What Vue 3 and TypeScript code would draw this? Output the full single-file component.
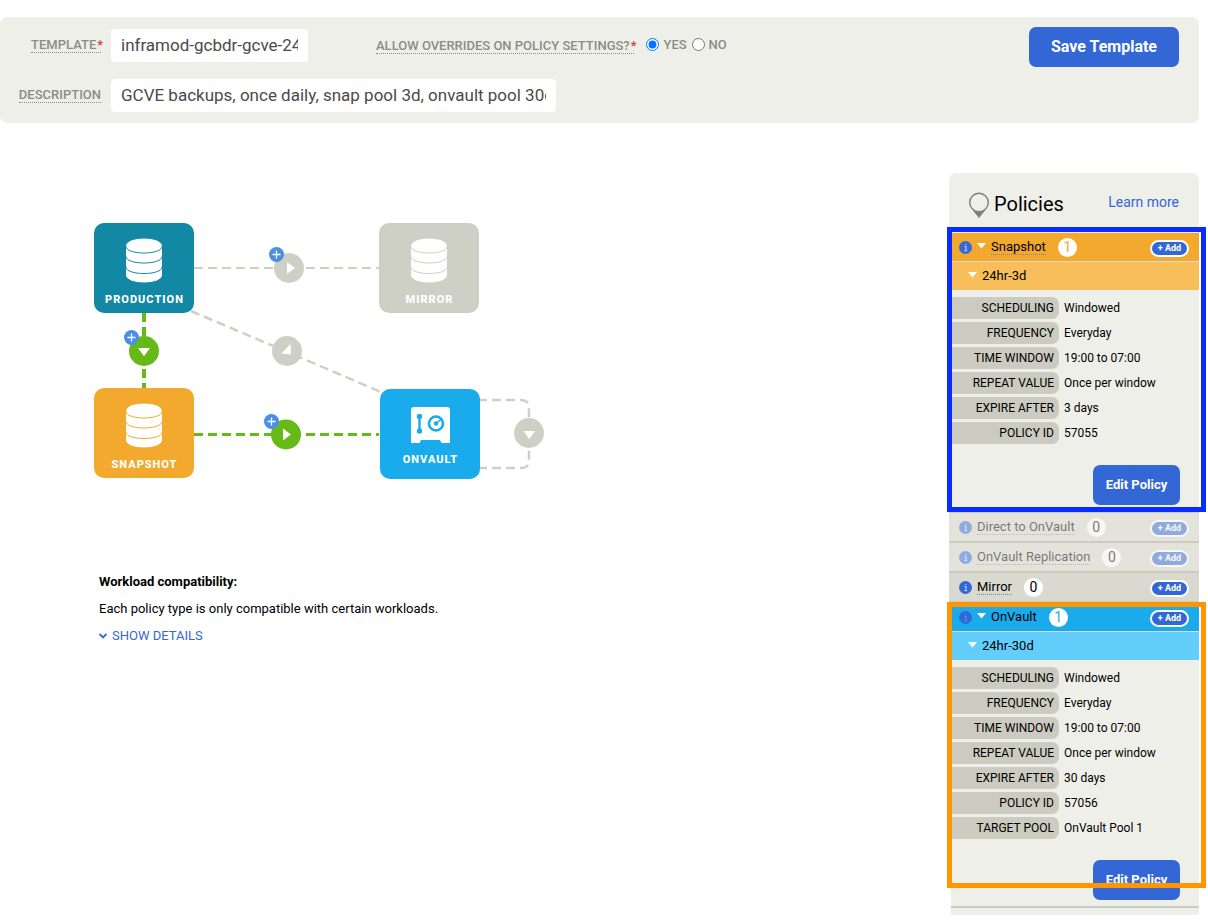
<script setup lang="ts">
import { ref } from 'vue'

interface Field {
  label: string
  value: string
}

interface Policy {
  name: string
  fields: Field[]
}

interface Section {
  id: string
  title: string
  count: number
  disabled?: boolean
  highlighted?: boolean
  policy?: Policy
}

interface FlowNode {
  id: string
  label: string
  icon: 'disks' | 'vault'
}

const templateName = ref('inframod-gcbdr-gcve-24hr')
const description = ref('GCVE backups, once daily, snap pool 3d, onvault pool 30d')
const allowOverrides = ref('yes')

const nodes: FlowNode[] = [
  { id: 'production', label: 'PRODUCTION', icon: 'disks' },
  { id: 'mirror', label: 'MIRROR', icon: 'disks' },
  { id: 'snapshot', label: 'SNAPSHOT', icon: 'disks' },
  { id: 'onvault', label: 'ONVAULT', icon: 'vault' },
]

const sections: Section[] = [
  {
    id: 'snapshot',
    title: 'Snapshot',
    count: 1,
    highlighted: true,
    policy: {
      name: '24hr-3d',
      fields: [
        { label: 'SCHEDULING', value: 'Windowed' },
        { label: 'FREQUENCY', value: 'Everyday' },
        { label: 'TIME WINDOW', value: '19:00 to 07:00' },
        { label: 'REPEAT VALUE', value: 'Once per window' },
        { label: 'EXPIRE AFTER', value: '3 days' },
        { label: 'POLICY ID', value: '57055' },
      ],
    },
  },
  { id: 'direct', title: 'Direct to OnVault', count: 0, disabled: true },
  { id: 'replication', title: 'OnVault Replication', count: 0, disabled: true },
  { id: 'mirror', title: 'Mirror', count: 0 },
  {
    id: 'onvault',
    title: 'OnVault',
    count: 1,
    highlighted: true,
    policy: {
      name: '24hr-30d',
      fields: [
        { label: 'SCHEDULING', value: 'Windowed' },
        { label: 'FREQUENCY', value: 'Everyday' },
        { label: 'TIME WINDOW', value: '19:00 to 07:00' },
        { label: 'REPEAT VALUE', value: 'Once per window' },
        { label: 'EXPIRE AFTER', value: '30 days' },
        { label: 'POLICY ID', value: '57056' },
        { label: 'TARGET POOL', value: 'OnVault Pool 1' },
      ],
    },
  },
]
</script>

<template>
  <div class="page">
    <header class="template-bar">
      <form class="template-form" @submit.prevent>
        <div class="form-row">
          <div class="label-cell">
            <label class="field-label" for="template-name">TEMPLATE<span class="required">*</span></label>
          </div>
          <input id="template-name" v-model="templateName" class="text-input name-input" type="text" />
          <div class="overrides" role="radiogroup" aria-labelledby="overrides-label">
            <span id="overrides-label" class="field-label overrides-label">ALLOW OVERRIDES ON POLICY SETTINGS?<span class="required">*</span></span>
            <label class="radio"><input v-model="allowOverrides" type="radio" name="overrides" value="yes" />YES</label>
            <label class="radio"><input v-model="allowOverrides" type="radio" name="overrides" value="no" />NO</label>
          </div>
        </div>
        <div class="form-row">
          <div class="label-cell">
            <label class="field-label" for="template-description">DESCRIPTION</label>
          </div>
          <input id="template-description" v-model="description" class="text-input description-input" type="text" />
        </div>
      </form>
      <button class="primary save" type="button">Save Template</button>
    </header>

    <main class="content">
      <section class="workspace">
        <div class="canvas">
          <svg class="links" viewBox="0 0 460 260" width="460" height="260" aria-hidden="true">
            <g fill="none" stroke="#cfd0c5" stroke-width="2" stroke-dasharray="9 5">
              <path d="M100 45H285" />
              <path d="M97 88L287 169" stroke-width="2.500" />
              <path d="M386 177H427Q435 177 435 185V195" stroke-width="2.500" stroke-dashoffset="2" />
              <path d="M386 245H427Q435 245 435 237V225" stroke-width="2.500" stroke-dashoffset="2" />
            </g>
            <g fill="none" stroke="#65ba16" stroke-dasharray="9 5">
              <path d="M50 90V165" stroke-width="4" />
              <path d="M100 211.500H285" stroke-width="3" />
            </g>
            <g fill="#cfd0c5">
              <circle cx="195" cy="45" r="15" />
              <circle cx="193" cy="128" r="15" />
              <circle cx="435" cy="210" r="15" />
            </g>
            <g fill="#65ba16">
              <circle cx="50" cy="128" r="15" />
              <circle cx="192" cy="211.500" r="15" />
            </g>
            <g fill="#fff">
              <path d="M193 39L201 45L193 51Z" />
              <path d="M196.500 121L197 131.500L187.300 130.500Z" />
              <path d="M429.500 208H441L435.200 216Z" />
              <path d="M44 125H56L50 133.200Z" />
              <path d="M189 205.500L197 211.500L189 217.500Z" />
            </g>
            <g fill="#4a8fe2">
              <circle cx="182.500" cy="31.500" r="7.500" />
              <circle cx="37.500" cy="114.500" r="7.500" />
              <circle cx="177.500" cy="198.500" r="7.500" />
            </g>
            <g stroke="#fff" stroke-width="1.300">
              <path d="M178.500 31.500h8M182.500 27.500v8" />
              <path d="M33.500 114.500h8M37.500 110.500v8" />
              <path d="M173.500 198.500h8M177.500 194.500v8" />
            </g>
          </svg>
          <button v-for="node in nodes" :key="node.id" type="button" class="node" :class="node.id">
            <svg v-if="node.icon === 'disks'" class="node-icon" viewBox="0 0 38 45" width="38" height="45" aria-hidden="true">
              <path d="M1 8C1 3.500 9 .5 19 .5S37 3.500 37 8V37C37 41.500 29 44.500 19 44.500S1 41.500 1 37Z" fill="#fff" />
              <g fill="none" stroke="currentColor" stroke-width="1">
                <path d="M1 8.500C1 12.500 9 15 19 15S37 12.500 37 8.500" />
                <path d="M1 18.500C1 22.500 9 25 19 25S37 22.500 37 18.500" />
                <path d="M1 29C1 33 9 35.500 19 35.500S37 33 37 29" />
              </g>
            </svg>
            <svg v-else class="node-icon" viewBox="0 0 39 36" width="39" height="36" aria-hidden="true">
              <path d="M3 0H36Q39 0 39 3V36H30.500L29 33H10L8.500 36H0V3Q0 0 3 0Z" fill="#fff" />
              <g fill="none" stroke="currentColor">
                <path d="M8.500 10V24" stroke-width="2.400" />
                <circle cx="25" cy="16.500" r="7" stroke-width="2.600" />
                <path d="M25 16.500L30.500 12" stroke-width="1.600" />
              </g>
              <g fill="currentColor">
                <circle cx="8.500" cy="9.500" r="2.700" />
                <circle cx="8.500" cy="24" r="2.700" />
                <circle cx="25" cy="16.500" r="2.200" />
              </g>
            </svg>
            <span class="node-label">{{ node.label }}</span>
          </button>
        </div>

        <div class="compatibility">
          <h2>Workload compatibility:</h2>
          <p>Each policy type is only compatible with certain workloads.</p>
          <a href="#details" class="details-link">
            <svg viewBox="0 0 8 6" width="8" height="6" aria-hidden="true">
              <path d="M.5 1L4 4.500L7.500 1" fill="none" stroke="currentColor" stroke-width="1.800" />
            </svg>
            SHOW DETAILS
          </a>
        </div>
      </section>

      <aside class="policies">
        <div class="policies-header">
          <svg viewBox="0 0 20 26" width="20" height="26" aria-hidden="true">
            <path d="M4.500 18.500Q10 22 15.500 18.500L10 25.500Z" fill="#7d7f78" stroke="#7d7f78" />
            <circle cx="10" cy="10.500" r="9.300" fill="#efefea" stroke="#7d7f78" stroke-width="1.400" />
          </svg>
          <h1>Policies</h1>
          <a href="#learn">Learn more</a>
        </div>

        <section v-for="section in sections" :key="section.id" class="section" :class="section.id">
          <div class="section-row" :class="{ disabled: section.disabled }">
            <svg class="info" viewBox="0 0 13 13" width="13" height="13" aria-hidden="true">
              <circle cx="6.500" cy="6.500" r="6.500" fill="#3367d6" />
              <path d="M5.500 5.500H7V9.500M5.200 9.700H8.200M6 3.500H7.200" fill="none" stroke="currentColor" stroke-width="1.100" />
            </svg>
            <svg v-if="section.policy" class="caret" viewBox="0 0 9 8" width="9" height="8" aria-hidden="true">
              <path d="M0 0H9L4.500 5.500Z" fill="#fff" />
            </svg>
            <span class="section-title">{{ section.title }}</span>
            <span class="count">{{ section.count }}</span>
            <button class="add" type="button" :disabled="section.disabled">+ Add</button>
          </div>
          <template v-if="section.policy">
            <div class="policy-row">
              <svg viewBox="0 0 9 6" width="9" height="6" aria-hidden="true">
                <path d="M0 0H9L4.500 5.500Z" fill="#fff" />
              </svg>
              {{ section.policy.name }}
            </div>
            <div class="policy-body">
              <dl>
                <div v-for="field in section.policy.fields" :key="field.label" class="field">
                  <dt>{{ field.label }}</dt>
                  <dd>{{ field.value }}</dd>
                </div>
              </dl>
              <button class="primary edit" type="button">Edit Policy</button>
            </div>
          </template>
          <div v-if="section.highlighted" class="highlight"></div>
        </section>
        <div class="policies-footer"></div>
      </aside>
    </main>
  </div>
</template>

<style>
body {
  margin: 0;
  background: #fff;
}
</style>

<style scoped>
.page {
  box-sizing: border-box;
  padding: 17px 9px 8px 0;
  font-family: Roboto, 'Liberation Sans', sans-serif;
  font-size: 13px;
  color: #000;
}

.page button,
.page input {
  font-family: inherit;
}

.page a {
  color: #3367d6;
  text-decoration: none;
}

.template-bar {
  display: flex;
  justify-content: space-between;
  align-items: flex-start;
  padding: 10px 20px 9px 9px;
  border-radius: 7px;
  background: #efefea;
}

.template-form {
  display: flex;
  flex-direction: column;
  gap: 17px;
  padding: 2px 0;
}

.form-row {
  display: flex;
  align-items: center;
  gap: 10px;
}

.label-cell {
  width: 92px;
  padding-bottom: 2px;
  text-align: right;
}

.field-label {
  display: inline-block;
  border-bottom: 1px dotted #8b8d84;
  font-size: 13px;
  font-weight: 500;
  line-height: 15px;
  white-space: nowrap;
  color: #8b8d84;
}

.required {
  margin: 0 -2px 0 1px;
  color: #d23f31;
}

.text-input {
  box-sizing: border-box;
  height: 33px;
  padding: 0 10px 2px;
  border: 0;
  border-radius: 4px;
  background: #fff;
  font-size: 17px;
  color: #4a4a4a;
}

.name-input {
  width: 197px;
}

.description-input {
  width: 445px;
}

.overrides {
  display: flex;
  align-items: center;
  gap: 5px;
  margin-left: 58px;
  padding-bottom: 2px;
}

.overrides-label {
  margin: 2px 7px 0 0;
}

.radio {
  display: flex;
  align-items: center;
  gap: 4px;
  font-weight: 500;
  color: #8b8d84;
}

.radio input {
  width: 13px;
  height: 13px;
  margin: 0;
}

.primary {
  height: 40px;
  padding: 0 0 2px;
  border: 0;
  border-radius: 7px;
  background: #3367d6;
  font-weight: 700;
  color: #fff;
}

.save {
  width: 150px;
  font-size: 16px;
}

.content {
  display: flex;
  justify-content: space-between;
  align-items: flex-start;
  padding-top: 50px;
}

.workspace {
  padding: 50px 0 0 94px;
}

.canvas {
  position: relative;
  width: 460px;
  height: 260px;
}

.links {
  display: block;
}

.node {
  position: absolute;
  display: flex;
  flex-direction: column;
  align-items: center;
  gap: 10px;
  width: 100px;
  height: 90px;
  padding: 15px 0 0;
  border: 0;
  border-radius: 10px;
}

.node.production {
  left: 0;
  top: 0;
  background: #1288a5;
  color: #1288a5;
}

.node.mirror {
  left: 285px;
  top: 0;
  background: #cfd0c5;
  color: #cfd0c5;
}

.node.snapshot {
  left: 0;
  top: 165px;
  background: #f2a92e;
  color: #f2a92e;
}

.node.onvault {
  left: 286px;
  top: 166px;
  padding-top: 18px;
  background: #19abec;
  color: #19abec;
}

.node-label {
  padding-left: 1px;
  font-size: 11px;
  font-weight: 800;
  line-height: 14px;
  letter-spacing: 1px;
  color: #fff;
}

.compatibility {
  padding: 85px 0 0 5px;
  line-height: 27px;
}

.compatibility h2,
.compatibility p {
  margin: 0;
  font-size: 13px;
}

.details-link {
  display: flex;
  align-items: center;
  gap: 5px;
}

.policies {
  width: 250px;
}

.policies-header {
  display: flex;
  align-items: center;
  height: 60px;
  padding: 0 20px;
  border-radius: 7px 7px 0 0;
  background: #efefea;
}

.policies-header svg {
  padding-top: 3px;
}

.policies-header h1 {
  margin: 0 auto 0 5px;
  padding-top: 2px;
  font-size: 20px;
  font-weight: 400;
}

.policies-header a {
  padding-bottom: 2px;
  font-size: 14px;
}

.section {
  position: relative;
  border-bottom: 2px solid #cbcbbf;
  background: #efefea;
}

.section-row {
  display: flex;
  align-items: center;
  height: 28px;
  padding: 0 10px;
  background: #d9d9cf;
  color: #000;
}

.section-row.disabled {
  opacity: 0.5;
}

.info {
  margin-right: 5px;
  color: #c3d3f5;
}

.caret {
  margin-right: 5px;
}

.section-title {
  border-bottom: 1px dotted #7d8590;
  line-height: 15px;
}

.count {
  width: 19px;
  height: 19px;
  margin: 0 auto 0 12px;
  border-radius: 50%;
  background: #fff;
  font-size: 14px;
  line-height: 19px;
  text-align: center;
}

.add {
  box-sizing: border-box;
  width: 39px;
  height: 17px;
  margin-top: 2px;
  padding: 0;
  border: 2px solid #fff;
  border-radius: 9px;
  background: #3367d6;
  font-size: 9px;
  font-weight: 700;
  line-height: 13px;
  color: #fff;
}

.policy-row {
  box-sizing: border-box;
  display: flex;
  align-items: center;
  gap: 5px;
  height: 29px;
  padding: 0 0 2px 19px;
  border-top: 1px solid #d9d9cf;
}

.snapshot .section-row {
  background: #f2a92e;
}

.snapshot .policy-row {
  background: #f8be59;
}

.snapshot .count {
  color: #f2a92e;
}

.policy-body {
  display: flex;
  flex-direction: column;
  padding: 7px 19px 6px 2px;
}

dl {
  display: flex;
  flex-direction: column;
  gap: 3px;
  margin: 0 0 21px;
  font-size: 12px;
  line-height: 22px;
}

.field {
  display: flex;
  gap: 5px;
}

dt {
  box-sizing: border-box;
  width: 108px;
  padding-right: 5px;
  border-radius: 0 7px 7px 0;
  background: #cbcbbf;
  text-align: right;
}

dd {
  margin: 0;
}

.edit {
  align-self: flex-end;
  width: 87px;
  font-size: 13px;
}

.highlight {
  position: absolute;
  inset: -6px -7px -1px -2px;
  border: 5px solid #0a2cff;
  pointer-events: none;
}

.section.snapshot .highlight {
  z-index: 1;
}

.section.onvault {
  margin-left: 2px;
}

.section.onvault .section-row {
  padding-left: 8px;
  background: #19abec;
}

.section.onvault .policy-row {
  padding-left: 17px;
  background: #63cefc;
}

.section.onvault .policy-body {
  padding-left: 0;
}

.section.onvault .count {
  color: #19abec;
}

.section.onvault .info {
  color: #19abec;
}

.section.onvault .section-title {
  border-bottom-color: #4a9cc4;
}

.section.onvault .highlight {
  inset: -1px -7px 18px -4px;
  border-color: #ff9500;
}

.policies-footer {
  height: 7px;
  margin-left: 2px;
  border-radius: 0 0 3px 0;
  background: #efefea;
}
</style>
